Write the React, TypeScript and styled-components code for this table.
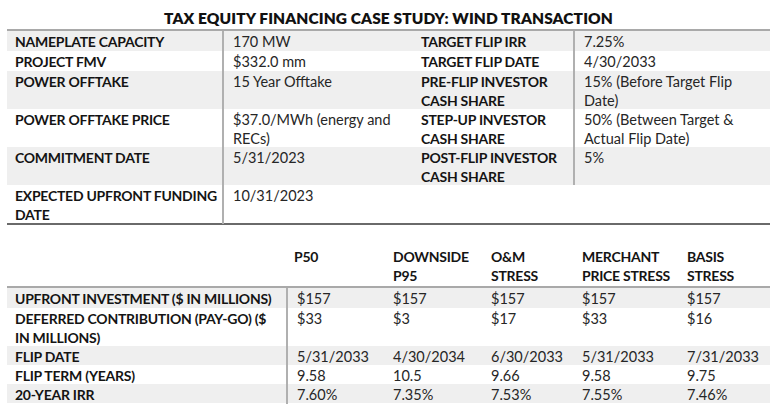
import React from "react";
import styled, { createGlobalStyle } from "styled-components";

const GlobalStyle = createGlobalStyle`
  html, body { margin: 0; padding: 0; background: #ffffff; }
  body { font-family: Lato, "Liberation Sans", sans-serif; color: #1e1e1e; }
`;

const Page = styled.div`
  width: 780px;
  height: 407px;
  padding: 8px 10px 0 7px;
  box-sizing: border-box;
  display: flex;
  flex-direction: column;
`;

const Title = styled.h1`
  margin: 0;
  height: 21px;
  font-size: 15.5px;
  line-height: 21px;
  font-weight: 800;
  text-align: center;
  color: #111;
  letter-spacing: 0.1px;
`;

const TopTable = styled.div`
  display: flex;
  flex-direction: column;
  border-top: 2px solid #a9a9a9;
  border-bottom: 2px solid #6a6a6a;
`;

const TopRow = styled.div<{ $shaded?: boolean; $lines: number }>`
  display: grid;
  grid-template-columns: 215px 191px 160px 197px;
  height: ${(p) => (p.$lines === 1 ? 20 : 38)}px;
  background: ${(p) => (p.$shaded ? "#efefef" : "#ffffff")};
`;

const Cell = styled.div<{ $bold?: boolean; $divider?: boolean }>`
  font-size: ${(p) => (p.$bold ? 14 : 14.5)}px;
  line-height: 19px;
  padding: 1px 0 0 ${(p) => (p.$divider ? 9 : 8)}px;
  font-weight: ${(p) => (p.$bold ? 700 : 400)};
  letter-spacing: ${(p) => (p.$bold ? "-0.25px" : "0")};
  color: ${(p) => (p.$bold ? "#141414" : "#262626")};
  border-left: ${(p) => (p.$divider ? "2px solid #b0b0b0" : "none")};
  white-space: nowrap;
  box-sizing: border-box;
`;

const Spacer = styled.div`
  height: 21px;
`;

const BottomTable = styled.div`
  display: flex;
  flex-direction: column;
`;

const BottomRow = styled.div<{ $shaded?: boolean; $height: number; $head?: boolean }>`
  display: grid;
  grid-template-columns: 279px 99px 98px 91px 105px 91px;
  height: ${(p) => p.$height}px;
  background: ${(p) => (p.$shaded ? "#efefef" : "#ffffff")};
  border-bottom: ${(p) => (p.$head ? "2px solid #a9a9a9" : "none")};
`;

type TopRowData = {
  a: React.ReactNode;
  b: React.ReactNode;
  c?: React.ReactNode;
  d?: React.ReactNode;
  lines: number;
};

const topRows: TopRowData[] = [
  { a: "NAMEPLATE CAPACITY", b: "170 MW", c: "TARGET FLIP IRR", d: "7.25%", lines: 1 },
  { a: "PROJECT FMV", b: "$332.0 mm", c: "TARGET FLIP DATE", d: "4/30/2033", lines: 1 },
  {
    a: "POWER OFFTAKE",
    b: "15 Year Offtake",
    c: (<>PRE-FLIP INVESTOR<br />CASH SHARE</>),
    d: (<>15% (Before Target Flip<br />Date)</>),
    lines: 2,
  },
  {
    a: "POWER OFFTAKE PRICE",
    b: (<>$37.0/MWh (energy and<br />RECs)</>),
    c: (<>STEP-UP INVESTOR<br />CASH SHARE</>),
    d: (<>50% (Between Target &amp;<br />Actual Flip Date)</>),
    lines: 2,
  },
  {
    a: "COMMITMENT DATE",
    b: "5/31/2023",
    c: (<>POST-FLIP INVESTOR<br />CASH SHARE</>),
    d: "5%",
    lines: 2,
  },
  {
    a: (<>EXPECTED UPFRONT FUNDING<br />DATE</>),
    b: "10/31/2023",
    lines: 2,
  },
];

const headers: React.ReactNode[] = [
  "P50",
  <>DOWNSIDE<br />P95</>,
  <>O&amp;M<br />STRESS</>,
  <>MERCHANT<br />PRICE STRESS</>,
  <>BASIS<br />STRESS</>,
];

type BottomRowData = { label: React.ReactNode; values: string[]; height: number };

const bottomRows: BottomRowData[] = [
  { label: "UPFRONT INVESTMENT ($ IN MILLIONS)", values: ["$157", "$157", "$157", "$157", "$157"], height: 20 },
  {
    label: (<>DEFERRED CONTRIBUTION (PAY-GO) ($<br />IN MILLIONS)</>),
    values: ["$33", "$3", "$17", "$33", "$16"],
    height: 38,
  },
  { label: "FLIP DATE", values: ["5/31/2033", "4/30/2034", "6/30/2033", "5/31/2033", "7/31/2033"], height: 19 },
  { label: "FLIP TERM (YEARS)", values: ["9.58", "10.5", "9.66", "9.58", "9.75"], height: 19 },
  { label: "20-YEAR IRR", values: ["7.60%", "7.35%", "7.53%", "7.55%", "7.46%"], height: 19 },
];

export default function App() {
  return (
    <>
      <GlobalStyle />
      <Page>
        <Title>TAX EQUITY FINANCING CASE STUDY: WIND TRANSACTION</Title>
        <TopTable>
          {topRows.map((r, i) => (
            <TopRow key={i} $shaded={i % 2 === 0} $lines={r.lines}>
              <Cell $bold>{r.a}</Cell>
              <Cell $divider>{r.b}</Cell>
              <Cell $bold>{r.c}</Cell>
              <Cell $divider={r.d !== undefined}>{r.d}</Cell>
            </TopRow>
          ))}
        </TopTable>
        <Spacer />
        <BottomTable>
          <BottomRow $height={40} $head>
            <Cell />
            {headers.map((h, i) => (
              <Cell key={i} $bold>
                {h}
              </Cell>
            ))}
          </BottomRow>
          {bottomRows.map((r, i) => (
            <BottomRow key={i} $shaded={i % 2 === 0} $height={r.height}>
              <Cell $bold>{r.label}</Cell>
              {r.values.map((v, j) => (
                <Cell key={j} $divider={j === 0}>
                  {v}
                </Cell>
              ))}
            </BottomRow>
          ))}
        </BottomTable>
      </Page>
    </>
  );
}
